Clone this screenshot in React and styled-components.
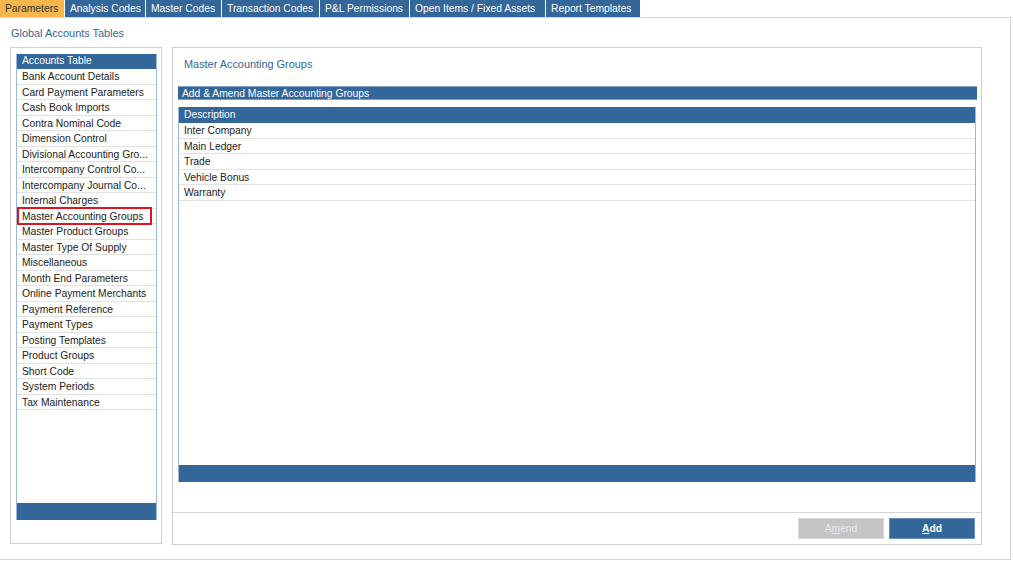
import React from "react";
import styled, { createGlobalStyle } from "styled-components";

const Global = createGlobalStyle`
  html, body { margin: 0; padding: 0; background: #fff; }
  body {
    font-family: "Liberation Sans", Arial, sans-serif;
    font-size: 10.3px;
    color: #222;
  }
`;

const BLUE = "#336699";
const EDGE = "#9db7d8";

const TabBar = styled.div`
  display: flex;
  height: 17px;
`;

const Tab = styled.div`
  width: ${(p) => p.$w}px;
  box-sizing: border-box;
  height: 17px;
  line-height: 17px;
  padding-left: 5px;
  margin-right: 1px;
  white-space: nowrap;
  background: ${(p) => (p.$active ? "#f7b74d" : BLUE)};
  color: ${(p) => (p.$active ? "#333" : "#fff")};
`;

const Frame = styled.div`
  width: 1000px;
  border-top: 1px solid #d4d4d4;
  border-right: 1px solid #d4d4d4;
  border-bottom: 1px solid #d4d4d4;
  padding: 8px 0 14px 10px;
`;

const PageTitle = styled.div`
  font-size: 10.9px;
  line-height: 14px;
  color: ${BLUE};
  padding-left: 1px;
  margin-bottom: 7px;
`;

const Panels = styled.div`
  display: flex;
  gap: 10px;
  align-items: flex-start;
`;

const Side = styled.div`
  width: 152px;
  height: 497px;
  box-sizing: border-box;
  border: 1px solid #cfcfcf;
  padding: 6px 4px 23px 5px;
  display: flex;
`;

const ListBox = styled.div`
  flex: 1;
  display: flex;
  flex-direction: column;
  border-left: 1px solid ${EDGE};
  border-right: 1px solid ${EDGE};
`;

const HeadBar = styled.div`
  height: ${(p) => p.$h}px;
  line-height: 13px;
  padding-top: ${(p) => (p.$h > 15 ? 1 : 0)}px;
  box-sizing: border-box;
  background: ${BLUE};
  color: #fff;
  padding-left: 5px;
  white-space: nowrap;
  flex-shrink: 0;
`;

const FootBar = styled.div`
  height: 17px;
  background: ${BLUE};
  flex-shrink: 0;
`;

const Rows = styled.div`
  flex: 1;
`;

const Row = styled.div`
  position: relative;
  box-sizing: border-box;
  height: 15.5px;
  padding-top: 1px;
  line-height: 13.5px;
  border-bottom: 1px solid #e2e2e2;
  padding-left: 5px;
  white-space: nowrap;
  overflow: ${(p) => (p.$marked ? "visible" : "hidden")};

  ${(p) =>
    p.$marked &&
    `
    &::after {
      content: "";
      position: absolute;
      left: 0;
      top: -2px;
      width: 131px;
      height: 14px;
      border: 2px solid #e0141e;
    }
  `}
`;

const Main = styled.div`
  width: 810px;
  height: 498px;
  box-sizing: border-box;
  border: 1px solid #cfcfcf;
  display: flex;
  flex-direction: column;
`;

const Content = styled.div`
  flex: 1;
  display: flex;
  flex-direction: column;
  padding: 9px 4px 30px 5px;
  border-bottom: 1px solid #d4d4d4;
`;

const SectionTitle = styled.div`
  font-size: 10.9px;
  line-height: 14px;
  color: ${BLUE};
  padding-left: 6px;
  margin-bottom: 15px;
`;

const Strip = styled.div`
  height: 12px;
  line-height: 13px;
  background: ${BLUE};
  border-top: 1px solid #7f9fc7;
  border-bottom: 1px solid #7f9fc7;
  color: #fff;
  padding-left: 4px;
  margin-bottom: 7px;
`;

const Grid = styled.div`
  flex: 1;
  margin-right: 1px;
  display: flex;
  flex-direction: column;
  border-left: 1px solid ${EDGE};
  border-right: 1px solid ${EDGE};
`;

const Buttons = styled.div`
  display: flex;
  justify-content: flex-end;
  gap: 5px;
  padding: 5px 6px 0 0;
  height: 31px;
  box-sizing: border-box;
  flex-shrink: 0;
`;

const Button = styled.div`
  width: 86px;
  height: 21px;
  box-sizing: border-box;
  line-height: 19px;
  text-align: center;
  border: 1px solid ${(p) => (p.$disabled ? "#d8d8d8" : "#6a8fbf")};
  background: ${(p) => (p.$disabled ? "#c4c4c4" : BLUE)};
  color: ${(p) => (p.$disabled ? "#ececec" : "#fff")};
  font-weight: ${(p) => (p.$disabled ? "normal" : "bold")};
`;

const tabs = [
  ["Parameters", 64],
  ["Analysis Codes", 80],
  ["Master Codes", 75],
  ["Transaction Codes", 97],
  ["P&L Permissions", 89],
  ["Open Items / Fixed Assets", 135],
  ["Report Templates", 94],
];

const tables = [
  "Bank Account Details",
  "Card Payment Parameters",
  "Cash Book Imports",
  "Contra Nominal Code",
  "Dimension Control",
  "Divisional Accounting Gro...",
  "Intercompany Control Co...",
  "Intercompany Journal Co...",
  "Internal Charges",
  "Master Accounting Groups",
  "Master Product Groups",
  "Master Type Of Supply",
  "Miscellaneous",
  "Month End Parameters",
  "Online Payment Merchants",
  "Payment Reference",
  "Payment Types",
  "Posting Templates",
  "Product Groups",
  "Short Code",
  "System Periods",
  "Tax Maintenance",
];

const groups = ["Inter Company", "Main Ledger", "Trade", "Vehicle Bonus", "Warranty"];

export default function App() {
  return (
    <>
      <Global />
      <TabBar>
        {tabs.map(([t, w], i) => (
          <Tab key={t} $w={w} $active={i === 0}>
            {t}
          </Tab>
        ))}
      </TabBar>
      <Frame>
        <PageTitle>Global Accounts Tables</PageTitle>
        <Panels>
          <Side>
            <ListBox>
              <HeadBar $h={15}>Accounts Table</HeadBar>
              <Rows>
                {tables.map((t) => (
                  <Row key={t} $marked={t === "Master Accounting Groups"}>
                    {t}
                  </Row>
                ))}
              </Rows>
              <FootBar />
            </ListBox>
          </Side>
          <Main>
            <Content>
              <SectionTitle>Master Accounting Groups</SectionTitle>
              <Strip>Add &amp; Amend Master Accounting Groups</Strip>
              <Grid>
                <HeadBar $h={16}>Description</HeadBar>
                <Rows>
                  {groups.map((g) => (
                    <Row key={g}>{g}</Row>
                  ))}
                </Rows>
                <FootBar />
              </Grid>
            </Content>
            <Buttons>
              <Button $disabled>
                A<u>m</u>end
              </Button>
              <Button>
                <u>A</u>dd
              </Button>
            </Buttons>
          </Main>
        </Panels>
      </Frame>
    </>
  );
}
